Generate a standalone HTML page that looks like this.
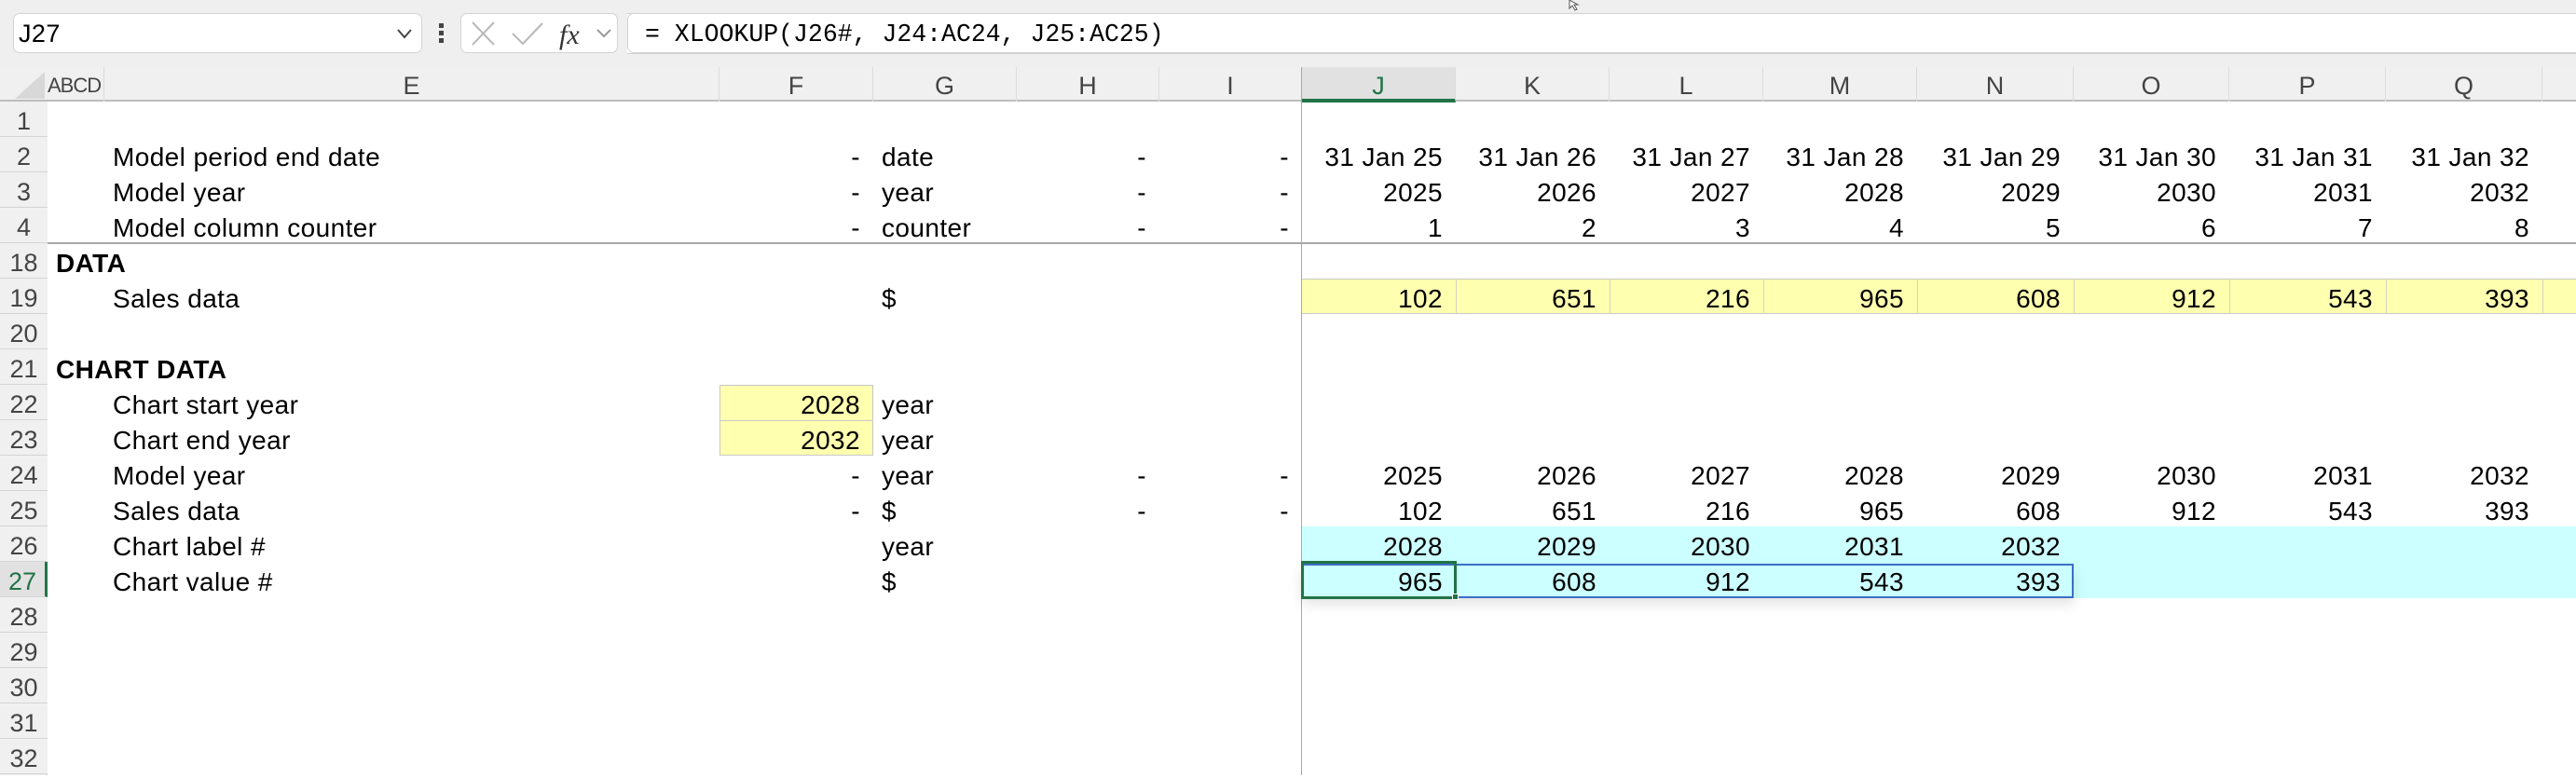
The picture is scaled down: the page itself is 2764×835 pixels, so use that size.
<!DOCTYPE html>
<html><head><meta charset="utf-8"><style>
*{margin:0;padding:0;box-sizing:border-box}
body{width:2764px;height:832px;overflow:hidden;background:#fff;font-family:"Liberation Sans",Arial,sans-serif;font-size:28px;color:#000;position:relative}
.a{position:absolute}
.t{position:absolute;height:38px;line-height:43px;white-space:nowrap;letter-spacing:0.4px}
.r{text-align:right}
.ch{position:absolute;top:72px;height:37px;line-height:40px;text-align:center;color:#444;font-size:27px;border-right:1px solid #dcdcdc}
.rh{position:absolute;left:0;width:51px;height:38px;line-height:42px;text-align:center;color:#444;background:#f0f0f0;border-bottom:1px solid #d4d4d4;font-size:27px}
</style></head><body>
<div class="a" style="left:0;top:0;width:2764px;height:109px;background:#efefef"></div>
<div class="a" style="left:0;top:14px;width:2764px;height:44px;background:#fff;border-top:1px solid #d0d0d0;border-bottom:1px solid #d0d0d0"></div>
<div class="a" style="left:0;top:14px;width:673px;height:44px;background:#efefef"></div>
<div class="a" style="left:14px;top:14px;width:439px;height:43px;background:#fff;border:1px solid #d3d3d3;border-radius:7px"></div>
<div class="t" style="left:20px;top:16px;font-size:27px;line-height:40px">J27</div>
<svg class="a" style="left:424px;top:28px" width="20" height="16"><path d="M3 4 L10 12 L17 4" fill="none" stroke="#444" stroke-width="2"/></svg>
<div class="a" style="left:471px;top:25px;width:5px;height:5px;background:#444"></div>
<div class="a" style="left:471px;top:33px;width:5px;height:5px;background:#444"></div>
<div class="a" style="left:471px;top:41px;width:5px;height:5px;background:#444"></div>
<div class="a" style="left:494px;top:14px;width:169px;height:43px;background:#fff;border:1px solid #d3d3d3;border-radius:7px"></div>
<svg class="a" style="left:494px;top:14px" width="169" height="43">
<path d="M13 10 L36 34 M36 10 L13 34" stroke="#b8b8b8" stroke-width="2" fill="none"/>
<path d="M56 22 L67 33 L88 11" stroke="#b8b8b8" stroke-width="2" fill="none"/>
<text x="106" y="33" font-family="Liberation Serif,serif" font-style="italic" font-size="30" fill="#333">fx</text>
<path d="M147 18 L154 25 L161 18" stroke="#999" stroke-width="2" fill="none"/>
</svg>
<div class="a" style="left:673px;top:14px;width:2100px;height:43px;background:#fff;border:1px solid #d3d3d3;border-radius:7px"></div>
<div class="t" style="left:692px;top:16px;font-family:'Liberation Mono',monospace;font-size:26.5px;letter-spacing:0;line-height:42px">= XLOOKUP(J26#, J24:AC24, J25:AC25)</div>
<svg class="a" style="left:1682px;top:0" width="16" height="12"><path d="M2 0 L2 9 L5 6 L8 11 L10 10 L7 5 L11 5 Z" fill="#fff" stroke="#555" stroke-width="1"/></svg>
<div class="a" style="left:0;top:72px;width:2764px;height:37px;background:#f0f0f0;border-bottom:2px solid #bdbdbd"></div>
<svg class="a" style="left:0;top:72px" width="51" height="37"><path d="M16 34 L48 34 L48 5 Z" fill="#d8d8d8"/></svg>
<div class="ch" style="left:51px;width:61px;font-size:22px;text-align:left;letter-spacing:-1px">ABCD</div>
<div class="ch" style="left:112px;width:660px">E</div>
<div class="ch" style="left:772px;width:165px">F</div>
<div class="ch" style="left:937px;width:154px">G</div>
<div class="ch" style="left:1091px;width:153px">H</div>
<div class="ch" style="left:1244px;width:153px">I</div>
<div class="ch" style="left:1397px;width:165px;background:#e1e1e1;color:#217346;border-bottom:4px solid #217346;height:38px">J</div>
<div class="ch" style="left:1562px;width:165px">K</div>
<div class="ch" style="left:1727px;width:165px">L</div>
<div class="ch" style="left:1892px;width:165px">M</div>
<div class="ch" style="left:2057px;width:168px">N</div>
<div class="ch" style="left:2225px;width:167px">O</div>
<div class="ch" style="left:2392px;width:168px">P</div>
<div class="ch" style="left:2560px;width:168px">Q</div>
<div class="a" style="left:1397px;top:299px;width:1367px;height:38px;background:#ffffb0;border-top:1px solid #c8c8c8;border-bottom:1px solid #c8c8c8"></div>
<div class="a" style="left:772px;top:413px;width:165px;height:76px;background:#ffffb0;border:1px solid #c8c8c8"></div>
<div class="a" style="left:772px;top:451px;width:165px;height:1px;background:#c8c8c8"></div>
<div class="a" style="left:1397px;top:565px;width:1367px;height:77px;background:#ccffff"></div>
<svg class="a" style="left:1397px;top:299px" width="1367" height="38"><g stroke="#d4d4c0" stroke-width="1">
<path d="M165.5 0V38M330.5 0V38M495.5 0V38M660.5 0V38M828.5 0V38M995.5 0V38M1163.5 0V38M1331.5 0V38"/></g></svg>
<div class="a" style="left:51px;top:260px;width:2713px;height:2px;background:#a8a8a8"></div>
<div class="a" style="left:1396px;top:72px;width:1px;height:760px;background:#a8a8a8"></div>
<div class="a" style="left:0;top:109px;width:51px;height:723px;background:#f0f0f0;border-right:1px solid #c8c8c8"></div>
<div class="rh" style="top:109px">1</div>
<div class="rh" style="top:147px">2</div>
<div class="rh" style="top:185px">3</div>
<div class="rh" style="top:223px">4</div>
<div class="rh" style="top:261px">18</div>
<div class="rh" style="top:299px">19</div>
<div class="rh" style="top:337px">20</div>
<div class="rh" style="top:375px">21</div>
<div class="rh" style="top:413px">22</div>
<div class="rh" style="top:451px">23</div>
<div class="rh" style="top:489px">24</div>
<div class="rh" style="top:527px">25</div>
<div class="rh" style="top:565px">26</div>
<div class="rh" style="top:603px;background:#e1e1e1;color:#217346;border-right:3px solid #217346">27</div>
<div class="rh" style="top:641px">28</div>
<div class="rh" style="top:679px">29</div>
<div class="rh" style="top:717px">30</div>
<div class="rh" style="top:755px">31</div>
<div class="rh" style="top:793px">32</div>
<div class="t" style="left:121px;top:147px">Model period end date</div>
<div class="t" style="left:121px;top:185px">Model year</div>
<div class="t" style="left:121px;top:223px">Model column counter</div>
<div class="t" style="left:60px;top:261px;font-weight:bold">DATA</div>
<div class="t" style="left:121px;top:299px">Sales data</div>
<div class="t" style="left:60px;top:375px;font-weight:bold">CHART DATA</div>
<div class="t" style="left:121px;top:413px">Chart start year</div>
<div class="t" style="left:121px;top:451px">Chart end year</div>
<div class="t" style="left:121px;top:489px">Model year</div>
<div class="t" style="left:121px;top:527px">Sales data</div>
<div class="t" style="left:121px;top:565px">Chart label #</div>
<div class="t" style="left:121px;top:603px">Chart value #</div>
<div class="t r" style="left:772px;width:151px;top:147px">-</div>
<div class="t r" style="left:772px;width:151px;top:185px">-</div>
<div class="t r" style="left:772px;width:151px;top:223px">-</div>
<div class="t r" style="left:772px;width:151px;top:489px">-</div>
<div class="t r" style="left:772px;width:151px;top:527px">-</div>
<div class="t r" style="left:772px;width:151px;top:413px">2028</div>
<div class="t r" style="left:772px;width:151px;top:451px">2032</div>
<div class="t" style="left:946px;top:147px">date</div>
<div class="t" style="left:946px;top:185px">year</div>
<div class="t" style="left:946px;top:223px">counter</div>
<div class="t" style="left:946px;top:299px">$</div>
<div class="t" style="left:946px;top:413px">year</div>
<div class="t" style="left:946px;top:451px">year</div>
<div class="t" style="left:946px;top:489px">year</div>
<div class="t" style="left:946px;top:527px">$</div>
<div class="t" style="left:946px;top:565px">year</div>
<div class="t" style="left:946px;top:603px">$</div>
<div class="t r" style="left:1091px;width:139px;top:147px">-</div>
<div class="t r" style="left:1091px;width:139px;top:185px">-</div>
<div class="t r" style="left:1091px;width:139px;top:223px">-</div>
<div class="t r" style="left:1091px;width:139px;top:489px">-</div>
<div class="t r" style="left:1091px;width:139px;top:527px">-</div>
<div class="t r" style="left:1244px;width:139px;top:147px">-</div>
<div class="t r" style="left:1244px;width:139px;top:185px">-</div>
<div class="t r" style="left:1244px;width:139px;top:223px">-</div>
<div class="t r" style="left:1244px;width:139px;top:489px">-</div>
<div class="t r" style="left:1244px;width:139px;top:527px">-</div>
<div class="t r" style="left:1397px;width:151px;top:147px">31 Jan 25</div>
<div class="t r" style="left:1562px;width:151px;top:147px">31 Jan 26</div>
<div class="t r" style="left:1727px;width:151px;top:147px">31 Jan 27</div>
<div class="t r" style="left:1892px;width:151px;top:147px">31 Jan 28</div>
<div class="t r" style="left:2057px;width:154px;top:147px">31 Jan 29</div>
<div class="t r" style="left:2225px;width:153px;top:147px">31 Jan 30</div>
<div class="t r" style="left:2392px;width:154px;top:147px">31 Jan 31</div>
<div class="t r" style="left:2560px;width:154px;top:147px">31 Jan 32</div>
<div class="t r" style="left:1397px;width:151px;top:185px">2025</div>
<div class="t r" style="left:1562px;width:151px;top:185px">2026</div>
<div class="t r" style="left:1727px;width:151px;top:185px">2027</div>
<div class="t r" style="left:1892px;width:151px;top:185px">2028</div>
<div class="t r" style="left:2057px;width:154px;top:185px">2029</div>
<div class="t r" style="left:2225px;width:153px;top:185px">2030</div>
<div class="t r" style="left:2392px;width:154px;top:185px">2031</div>
<div class="t r" style="left:2560px;width:154px;top:185px">2032</div>
<div class="t r" style="left:1397px;width:151px;top:223px">1</div>
<div class="t r" style="left:1562px;width:151px;top:223px">2</div>
<div class="t r" style="left:1727px;width:151px;top:223px">3</div>
<div class="t r" style="left:1892px;width:151px;top:223px">4</div>
<div class="t r" style="left:2057px;width:154px;top:223px">5</div>
<div class="t r" style="left:2225px;width:153px;top:223px">6</div>
<div class="t r" style="left:2392px;width:154px;top:223px">7</div>
<div class="t r" style="left:2560px;width:154px;top:223px">8</div>
<div class="t r" style="left:1397px;width:151px;top:299px">102</div>
<div class="t r" style="left:1562px;width:151px;top:299px">651</div>
<div class="t r" style="left:1727px;width:151px;top:299px">216</div>
<div class="t r" style="left:1892px;width:151px;top:299px">965</div>
<div class="t r" style="left:2057px;width:154px;top:299px">608</div>
<div class="t r" style="left:2225px;width:153px;top:299px">912</div>
<div class="t r" style="left:2392px;width:154px;top:299px">543</div>
<div class="t r" style="left:2560px;width:154px;top:299px">393</div>
<div class="t r" style="left:1397px;width:151px;top:489px">2025</div>
<div class="t r" style="left:1562px;width:151px;top:489px">2026</div>
<div class="t r" style="left:1727px;width:151px;top:489px">2027</div>
<div class="t r" style="left:1892px;width:151px;top:489px">2028</div>
<div class="t r" style="left:2057px;width:154px;top:489px">2029</div>
<div class="t r" style="left:2225px;width:153px;top:489px">2030</div>
<div class="t r" style="left:2392px;width:154px;top:489px">2031</div>
<div class="t r" style="left:2560px;width:154px;top:489px">2032</div>
<div class="t r" style="left:1397px;width:151px;top:527px">102</div>
<div class="t r" style="left:1562px;width:151px;top:527px">651</div>
<div class="t r" style="left:1727px;width:151px;top:527px">216</div>
<div class="t r" style="left:1892px;width:151px;top:527px">965</div>
<div class="t r" style="left:2057px;width:154px;top:527px">608</div>
<div class="t r" style="left:2225px;width:153px;top:527px">912</div>
<div class="t r" style="left:2392px;width:154px;top:527px">543</div>
<div class="t r" style="left:2560px;width:154px;top:527px">393</div>
<div class="t r" style="left:1397px;width:151px;top:565px">2028</div>
<div class="t r" style="left:1562px;width:151px;top:565px">2029</div>
<div class="t r" style="left:1727px;width:151px;top:565px">2030</div>
<div class="t r" style="left:1892px;width:151px;top:565px">2031</div>
<div class="t r" style="left:2057px;width:154px;top:565px">2032</div>
<div class="a" style="left:1397px;top:605px;width:828px;height:37px;border:2px solid #3a6fc4;box-shadow:0 6px 14px rgba(0,0,0,0.12)"></div>
<div class="a" style="left:1396px;top:602px;width:167px;height:41px;border:3px solid #217346"></div>
<div class="a" style="left:1558px;top:637px;width:7px;height:7px;background:#217346;border:1px solid #fff"></div>
<div class="t r" style="left:1397px;width:151px;top:603px">965</div>
<div class="t r" style="left:1562px;width:151px;top:603px">608</div>
<div class="t r" style="left:1727px;width:151px;top:603px">912</div>
<div class="t r" style="left:1892px;width:151px;top:603px">543</div>
<div class="t r" style="left:2057px;width:154px;top:603px">393</div>
</body></html>
